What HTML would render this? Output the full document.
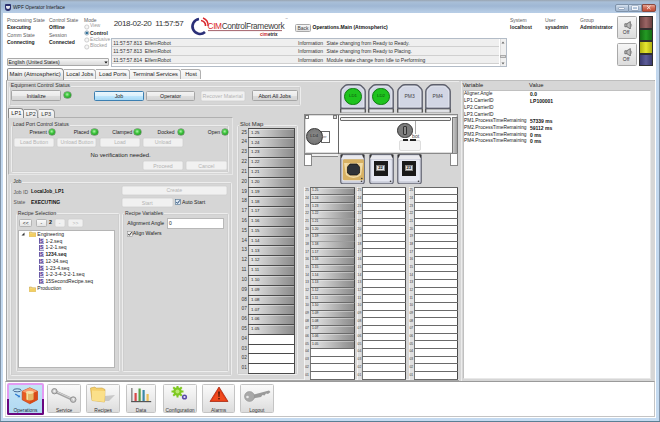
<!DOCTYPE html><html><head><meta charset="utf-8"><style>
*{box-sizing:border-box;margin:0;padding:0}
html,body{width:660px;height:422px;overflow:hidden;background:#fff;font-family:"Liberation Sans",sans-serif;color:#222}
.a{position:absolute}
.t{position:absolute;white-space:nowrap;line-height:1}
.b{font-weight:bold}
.btn{position:absolute;border:1px solid #a6a6a6;border-radius:1.5px;padding-top:0.7px;background:linear-gradient(#f3f3f3,#ebebeb 50%,#dddddd 51%,#d4d4d4);text-align:center;white-space:nowrap;color:#222}
.dis{border-color:#e4e4e4;background:#f1f1f1;color:#b4b4b4;box-shadow:0 0 0 0.5px #cfcfcf}
.grp{position:absolute;border:1px solid #bcbcbc;box-shadow:inset 1px 1px 0 #efefef, 1px 1px 0 #efefef}
.led{position:absolute;border-radius:50%;background:radial-gradient(circle at 45% 40%,#b0f4a8 0,#44c844 38%,#1f9a1f 75%,#2a6a2a 100%);box-shadow:0 0 0 0.5px #4a7a4a}
</style></head><body><div class="a" style="left:0px;top:0px;width:660px;height:422px;background:linear-gradient(#98a4b0,#a9bfd8 2px,#9fb7d4 6px,#b5cbe4 11.5px,#c2d7ee 20px,#c4daf0)"></div>
<div class="a" style="left:0px;top:0px;width:0.9px;height:422px;background:#8294a8"></div>
<div class="a" style="left:659.1px;top:0px;width:0.9px;height:422px;background:#8294a8"></div>
<div class="a" style="left:0px;top:421px;width:660px;height:1px;background:#5a7f94"></div>
<div class="a" style="left:3.2px;top:12.5px;width:653.3px;height:405.8px;background:#fff"></div>
<div class="a" style="left:4.5px;top:4px;width:6.5px;height:7px;background:#2a2f6e;border-radius:1px 1px 3px 3px"></div>
<div class="a" style="left:6px;top:5.5px;width:3.5px;height:3.5px;background:#e8e8f0;border-radius:0 0 2px 2px"></div>
<div class="t " style="left:13px;top:6.3px;font-size:4.9px;color:#1c1c24">WPF Operator Interface</div>
<div class="a" style="left:614.5px;top:4px;width:14px;height:7.5px;border:0.8px solid #7f93aa;border-radius:2px 0 0 2px;background:linear-gradient(#d4e0ee,#b2c4da 50%,#a6bad2)"></div>
<div class="a" style="left:618.5px;top:8.3px;width:5px;height:1.2px;background:#f4f6fa;box-shadow:0 0 0 0.4px #7a8aa0"></div>
<div class="a" style="left:628.5px;top:4px;width:13px;height:7.5px;border:0.8px solid #7f93aa;border-left:0;background:linear-gradient(#d4e0ee,#b2c4da 50%,#a6bad2)"></div>
<div class="a" style="left:632.3px;top:5.6px;width:5.4px;height:4.3px;border:0.8px solid #f2f5fa;box-shadow:0 0 0 0.4px #7a8aa0"></div>
<div class="a" style="left:641.5px;top:4px;width:14.5px;height:7.5px;border:0.8px solid #8a4a40;border-radius:0 2px 2px 0;background:linear-gradient(#e6a898,#d06a54 50%,#c04a34)"></div>
<svg class="a" style="left:646px;top:5.3px" width="5.5" height="5" viewBox="0 0 5.5 5"><path d="M1 0.8 L4.5 4.2 M4.5 0.8 L1 4.2" stroke="#f6e8e4" stroke-width="0.95"/></svg>
<div class="t " style="left:7px;top:18px;font-size:5px;color:#5c5c5c">Processing State</div>
<div class="t b" style="left:7px;top:24.5px;font-size:5px;">Executing</div>
<div class="t " style="left:7px;top:33px;font-size:5px;color:#5c5c5c">Comm State</div>
<div class="t b" style="left:7px;top:39.5px;font-size:5px;">Connecting</div>
<div class="t " style="left:49px;top:18px;font-size:5px;color:#5c5c5c">Control State</div>
<div class="t b" style="left:49px;top:24.5px;font-size:5px;">Offline</div>
<div class="t " style="left:49px;top:33px;font-size:5px;color:#5c5c5c">Session</div>
<div class="t b" style="left:49px;top:39.5px;font-size:5px;">Connected</div>
<div class="t " style="left:84px;top:18px;font-size:5px;color:#5c5c5c">Mode</div>
<svg class="a" style="left:83.5px;top:23.5px" width="6" height="6" viewBox="0 0 6 6"><circle cx="2.8" cy="3" r="2.1" fill="#f6f6f6" stroke="#b4b4b4" stroke-width="0.6"/></svg>
<div class="t " style="left:90px;top:23.900000000000002px;font-size:4.75px;color:#9a9a9a">View</div>
<svg class="a" style="left:83.5px;top:30.3px" width="6" height="6" viewBox="0 0 6 6"><circle cx="2.8" cy="3" r="2.1" fill="#eef2f5" stroke="#6f8799" stroke-width="0.6"/><circle cx="2.8" cy="3" r="1.3" fill="#2e6f98"/></svg>
<div class="t b" style="left:90px;top:30.6px;font-size:5px;">Control</div>
<svg class="a" style="left:83.5px;top:37.1px" width="6" height="6" viewBox="0 0 6 6"><circle cx="2.8" cy="3" r="2.1" fill="#f6f6f6" stroke="#b4b4b4" stroke-width="0.6"/></svg>
<div class="t " style="left:90px;top:37.5px;font-size:4.75px;color:#9a9a9a">Exclusive</div>
<svg class="a" style="left:83.5px;top:43.900000000000006px" width="6" height="6" viewBox="0 0 6 6"><circle cx="2.8" cy="3" r="2.1" fill="#f6f6f6" stroke="#b4b4b4" stroke-width="0.6"/></svg>
<div class="t " style="left:90px;top:44.300000000000004px;font-size:4.75px;color:#9a9a9a">Blocked</div>
<div class="t " style="left:113.7px;top:19.7px;font-size:8.1px;color:#333;letter-spacing:-0.36px">2018-02-20&nbsp; 11:57:57</div>
<svg class="a" style="left:190px;top:16px" width="100" height="24" viewBox="0 0 100 24">
<path d="M9 3 A7.5 7.5 0 1 0 15 16" fill="none" stroke="#2a2f78" stroke-width="2.6"/>
<path d="M11 4.5 A5 5 0 0 1 15.5 10" fill="none" stroke="#d9262c" stroke-width="1.6"/>
<path d="M13 2 A8 8 0 0 1 18 10" fill="none" stroke="#d9262c" stroke-width="1.4"/>
<line x1="18" y1="14.6" x2="92" y2="14.6" stroke="#7a1c2a" stroke-width="0.7"/>
</svg>
<div class="t " style="left:207.5px;top:21.5px;font-size:8.3px;color:#3b3b3b;letter-spacing:-0.35px"><span style="color:#d9262c">CIM</span>ControlFramework</div>
<div class="t " style="left:285px;top:18px;font-size:3px;color:#888">&trade;</div>
<div class="t " style="left:260px;top:32.5px;font-size:4.6px;color:#222;font-weight:bold"><span style="color:#c8262c">cim</span>etrix</div>
<div class="btn " style="left:295.3px;top:24.2px;width:15.5px;height:7.6px;line-height:5.6px;font-size:5px;background:linear-gradient(#f7f7f7,#e0e0e0);border-color:#a8a8a8;line-height:5.8px;color:#444">Back</div>
<div class="t b" style="left:312.5px;top:25px;font-size:5.05px;color:#111">Operations.Main (Atmospheric)</div>
<div class="t " style="left:510px;top:17.5px;font-size:5px;color:#5c5c5c">System</div>
<div class="t b" style="left:510px;top:24.5px;font-size:5px;">localhost</div>
<div class="t " style="left:545px;top:17.5px;font-size:5px;color:#5c5c5c">User</div>
<div class="t b" style="left:545px;top:24.5px;font-size:5px;">sysadmin</div>
<div class="t " style="left:580px;top:17.5px;font-size:5px;color:#5c5c5c">Group</div>
<div class="t b" style="left:580px;top:24.5px;font-size:5px;">Administrator</div>
<div class="a" style="left:617px;top:16px;width:20px;height:23px;border:1px solid #a9a9a9;border-radius:1.5px;background:linear-gradient(#f6f6f6,#dcdcdc)"></div>
<svg class="a" style="left:622.5px;top:20.6px" width="10" height="8.5" viewBox="0 0 12 10">
<path d="M2.2 3.2 L4.6 3.2 L8.8 0.6 L8.8 9.4 L4.6 6.8 L2.2 6.8 Z" fill="#bdbdbd" stroke="#4a4a4a" stroke-width="0.8" stroke-linejoin="round"/>
<path d="M4.6 3.2 L4.6 6.8" stroke="#4a4a4a" stroke-width="0.6"/>
<path d="M9.8 3.2 Q11 5 9.8 6.8" fill="none" stroke="#777" stroke-width="0.7"/>
</svg>
<div class="t " style="left:622.8px;top:30.3px;font-size:5px;color:#333">Off</div>
<div class="a" style="left:617px;top:43px;width:20px;height:23px;border:1px solid #a9a9a9;border-radius:1.5px;background:linear-gradient(#f6f6f6,#dcdcdc)"></div>
<svg class="a" style="left:622.5px;top:47.6px" width="10" height="8.5" viewBox="0 0 12 10">
<path d="M2.2 3.2 L4.6 3.2 L8.8 0.6 L8.8 9.4 L4.6 6.8 L2.2 6.8 Z" fill="#bdbdbd" stroke="#4a4a4a" stroke-width="0.8" stroke-linejoin="round"/>
<path d="M4.6 3.2 L4.6 6.8" stroke="#4a4a4a" stroke-width="0.6"/>
<path d="M9.8 3.2 Q11 5 9.8 6.8" fill="none" stroke="#777" stroke-width="0.7"/>
</svg>
<div class="t " style="left:622.8px;top:57.3px;font-size:5px;color:#333">Off</div>
<div class="a" style="left:639px;top:16.0px;width:14px;height:12.5px;border:0.6px solid #303030;background:linear-gradient(90deg,#6a4040,#9a6464 50%,#6a4040)"></div>
<div class="a" style="left:639px;top:28.5px;width:14px;height:12.5px;border:0.6px solid #303030;background:linear-gradient(90deg,#146e14,#249a24 50%,#146e14)"></div>
<div class="a" style="left:639px;top:41.0px;width:14px;height:12.5px;border:0.6px solid #303030;background:linear-gradient(90deg,#b0b010,#e6e630 50%,#b0b010)"></div>
<div class="a" style="left:639px;top:53.5px;width:14px;height:12.5px;border:0.6px solid #303030;background:linear-gradient(90deg,#3a3a70,#5c5c98 50%,#3a3a70)"></div>
<div class="a" style="left:111.4px;top:38.2px;width:395.5px;height:28.6px;border:1px solid #b3bcc7;background:#fff"></div>
<div class="a" style="left:112.4px;top:39.0px;width:387px;height:8.2px;background:#efefef;border-bottom:0.6px solid #d0d0d0"></div>
<div class="t " style="left:113.3px;top:41.0px;font-size:5px;color:#333">11:57:57.813</div>
<div class="t " style="left:144.7px;top:41.0px;font-size:5px;color:#333">ElfemRobot</div>
<div class="t " style="left:298px;top:41.0px;font-size:5px;color:#333">Information</div>
<div class="t " style="left:326.6px;top:41.0px;font-size:5px;color:#333">State changing from Ready to Ready.</div>
<div class="a" style="left:112.4px;top:47.4px;width:387px;height:8.2px;background:#efefef;border-bottom:0.6px solid #d0d0d0"></div>
<div class="t " style="left:113.3px;top:49.4px;font-size:5px;color:#333">11:57:57.813</div>
<div class="t " style="left:144.7px;top:49.4px;font-size:5px;color:#333">ElfemRobot</div>
<div class="t " style="left:298px;top:49.4px;font-size:5px;color:#333">Information</div>
<div class="t " style="left:326.6px;top:49.4px;font-size:5px;color:#333">State changing from Ready to Placing.</div>
<div class="a" style="left:112.4px;top:55.8px;width:387px;height:8.2px;background:#efefef;border-bottom:0.6px solid #d0d0d0"></div>
<div class="t " style="left:113.3px;top:57.8px;font-size:5px;color:#333">11:57:57.814</div>
<div class="t " style="left:144.7px;top:57.8px;font-size:5px;color:#333">ElfemRobot</div>
<div class="t " style="left:298px;top:57.8px;font-size:5px;color:#333">Information</div>
<div class="t " style="left:326.6px;top:57.8px;font-size:5px;color:#333">Module state change from Idle to Performing</div>
<div class="a" style="left:499.5px;top:39.2px;width:6.5px;height:26.6px;background:#f0f0f0;border-left:0.5px solid #ddd"></div>
<svg class="a" style="left:501px;top:41px" width="4" height="3" viewBox="0 0 4 3"><path d="M0.5 2.5 L2 0.6 L3.5 2.5Z" fill="#666"/></svg>
<svg class="a" style="left:501px;top:61.8px" width="4" height="3" viewBox="0 0 4 3"><path d="M0.5 0.5 L2 2.4 L3.5 0.5Z" fill="#666"/></svg>
<div class="a" style="left:500px;top:55px;width:6px;height:3px;background:#dcdcdc;border:0.5px solid #aaa"></div>
<div class="a" style="left:7px;top:57.5px;width:102px;height:8.5px;border:1px solid #a9a9a9;border-radius:1px;background:linear-gradient(#f7f7f7,#e6e6e6 50%,#dadada)"></div>
<div class="t " style="left:8.5px;top:59.5px;font-size:5px;color:#222">English (United States)</div>
<svg class="a" style="left:103.5px;top:60.6px" width="4" height="3" viewBox="0 0 4 3"><path d="M0.3 0.4 L2 2.6 L3.7 0.4Z" fill="#111"/></svg>
<div class="a" style="left:6.5px;top:68.3px;width:57.3px;height:12px;border:1px solid #8c8c8c;border-bottom:0;border-radius:2px 4px 0 0;background:linear-gradient(#fdfdfd,#e6e6e6 70%,#dcdcdc)"></div>
<div class="t " style="left:6.5px;top:72.2px;width:57.3px;text-align:center;font-size:5.9px;color:#222">Main (Atmospheric)</div>
<div class="a" style="left:63.8px;top:69.3px;width:32.0px;height:10.2px;border:1px solid #b0b0b0;border-left:0;border-bottom:0;border-radius:0 3px 0 0;background:linear-gradient(#fafafa,#ececec)"></div>
<div class="t " style="left:63.8px;top:72.3px;width:32.0px;text-align:center;font-size:5.7px;color:#222">Local Jobs</div>
<div class="a" style="left:95.7px;top:69.3px;width:34.3px;height:10.2px;border:1px solid #b0b0b0;border-left:0;border-bottom:0;border-radius:0 3px 0 0;background:linear-gradient(#fafafa,#ececec)"></div>
<div class="t " style="left:95.7px;top:72.3px;width:34.3px;text-align:center;font-size:5.7px;color:#222">Load Ports</div>
<div class="a" style="left:130px;top:69.3px;width:51px;height:10.2px;border:1px solid #b0b0b0;border-left:0;border-bottom:0;border-radius:0 3px 0 0;background:linear-gradient(#fafafa,#ececec)"></div>
<div class="t " style="left:130px;top:72.3px;width:51px;text-align:center;font-size:5.7px;color:#222">Terminal Services</div>
<div class="a" style="left:181px;top:69.3px;width:20px;height:10.2px;border:1px solid #b0b0b0;border-left:0;border-bottom:0;border-radius:0 3px 0 0;background:linear-gradient(#fafafa,#ececec)"></div>
<div class="t " style="left:181px;top:72.3px;width:20px;text-align:center;font-size:5.7px;color:#222">Host</div>
<div class="a" style="left:6px;top:79.5px;width:649px;height:301px;background:#d6d6d6;border:1px solid #a6a6a6;border-top-color:#bdbdbd"></div>
<div class="a" style="left:7px;top:80.5px;width:647px;height:299px;border:1px solid #ececec"></div>
<div class="a" style="left:8.5px;top:85.5px;width:292.5px;height:20.5px;border:1px solid #ededed;border-radius:1.5px;box-shadow:inset 0 0 0 0.6px #c9c9c9"></div>
<div class="t" style="left:9.8px;top:82.7px;font-size:5.2px;color:#333;background:#d6d6d6;padding:0 1px">Equipment Control Status</div>
<div class="btn " style="left:11px;top:90.3px;width:50.4px;height:10.3px;line-height:8.3px;font-size:5.3px;">Initialize</div>
<div class="led" style="left:64.3px;top:91.7px;width:6.6px;height:6.6px"></div>
<div class="btn " style="left:94px;top:90.7px;width:50px;height:10px;line-height:8px;font-size:5.3px;border-color:#3c7fb1;background:linear-gradient(#eaf6fd,#d9f0fc 50%,#bee6fd 51%,#a7d9f5)">Job</div>
<div class="btn " style="left:146px;top:90.7px;width:49px;height:10px;line-height:8px;font-size:5.3px;">Operator</div>
<div class="btn dis" style="left:200.6px;top:90.7px;width:44px;height:10px;line-height:8px;font-size:5.3px;">Recover Material</div>
<div class="btn " style="left:251.6px;top:90.4px;width:46px;height:10.2px;line-height:8.2px;font-size:5.3px;">Abort All Jobs</div>
<div class="a" style="left:8px;top:117.3px;width:224.5px;height:57.7px;border:1px solid #b0b0b0;border-right-color:#e6e6e6;border-bottom-color:#e6e6e6;background:#d6d6d6"></div>
<div class="a" style="left:8.3px;top:107.6px;width:16.099999999999998px;height:10.7px;border:1px solid #888;border-bottom:0;border-radius:1px 4px 0 0;background:linear-gradient(#fdfdfd,#e9e9e9)"></div>
<div class="t " style="left:8.3px;top:111.2px;width:16.099999999999998px;text-align:center;font-size:5.7px;color:#222">LP1</div>
<div class="a" style="left:24.4px;top:109.3px;width:14.100000000000001px;height:8.3px;border:1px solid #999;border-left:0;border-bottom:0;border-radius:0 4px 0 0;background:linear-gradient(#f8f8f8,#e6e6e6)"></div>
<div class="t " style="left:23.9px;top:111.6px;width:14.100000000000001px;text-align:center;font-size:5.5px;color:#333">LP2</div>
<div class="a" style="left:38.5px;top:109.3px;width:16.5px;height:8.3px;border:1px solid #999;border-left:0;border-bottom:0;border-radius:0 4px 0 0;background:linear-gradient(#f8f8f8,#e6e6e6)"></div>
<div class="t " style="left:38.0px;top:111.6px;width:16.5px;text-align:center;font-size:5.5px;color:#333">LP3</div>
<div class="a" style="left:11.3px;top:124.5px;width:217.5px;height:48.5px;border:1px solid #ededed;border-radius:1.5px;box-shadow:inset 0 0 0 0.6px #c9c9c9"></div>
<div class="t" style="left:12px;top:121.7px;font-size:5.1px;color:#333;background:#d6d6d6;padding:0 1px">Load Port Control Status</div>
<div class="t" style="left:6.799999999999997px;top:129.8px;width:40px;text-align:right;font-size:5px;color:#222">Present</div>
<div class="led" style="left:48.599999999999994px;top:129.10000000000002px;width:6.4px;height:6.4px"></div>
<div class="t" style="left:49.0px;top:129.8px;width:40px;text-align:right;font-size:5px;color:#222">Placed</div>
<div class="led" style="left:91.3px;top:129.10000000000002px;width:6.4px;height:6.4px"></div>
<div class="t" style="left:92.30000000000001px;top:129.8px;width:40px;text-align:right;font-size:5px;color:#222">Clamped</div>
<div class="led" style="left:134.3px;top:129.10000000000002px;width:6.4px;height:6.4px"></div>
<div class="t" style="left:134.5px;top:129.8px;width:40px;text-align:right;font-size:5px;color:#222">Docked</div>
<div class="led" style="left:177.5px;top:129.10000000000002px;width:6.4px;height:6.4px"></div>
<div class="t" style="left:180.0px;top:129.8px;width:40px;text-align:right;font-size:5px;color:#222">Open</div>
<div class="led" style="left:221.8px;top:129.10000000000002px;width:6.4px;height:6.4px"></div>
<div class="btn dis" style="left:14.2px;top:137.7px;width:39.8px;height:9.2px;line-height:7.199999999999999px;font-size:5.2px;">Load Button</div>
<div class="btn dis" style="left:57.3px;top:137.7px;width:39.10000000000001px;height:9.2px;line-height:7.199999999999999px;font-size:5.2px;">Unload Button</div>
<div class="btn dis" style="left:100px;top:137.7px;width:40px;height:9.2px;line-height:7.199999999999999px;font-size:5.2px;">Load</div>
<div class="btn dis" style="left:143px;top:137.7px;width:40px;height:9.2px;line-height:7.199999999999999px;font-size:5.2px;">Unload</div>
<div class="t " style="left:90.5px;top:152.5px;font-size:5.9px;color:#222">No verification needed.</div>
<div class="btn dis" style="left:143px;top:161px;width:40px;height:9px;line-height:7px;font-size:5.2px;">Proceed</div>
<div class="btn dis" style="left:185.5px;top:161px;width:41.5px;height:9px;line-height:7px;font-size:5.2px;">Cancel</div>
<div class="a" style="left:10px;top:181.8px;width:222px;height:193.8px;border:1px solid #ededed;border-radius:1.5px;box-shadow:inset 0 0 0 0.6px #c9c9c9"></div>
<div class="t" style="left:12.2px;top:179.0px;font-size:5.1px;color:#333;background:#d6d6d6;padding:0 1px">Job</div>
<div class="t " style="left:13.6px;top:189.6px;font-size:5px;color:#555">Job ID</div>
<div class="t b" style="left:31px;top:189.6px;font-size:4.85px;color:#111">LocalJob_LP1</div>
<div class="t " style="left:13.6px;top:200px;font-size:5px;color:#555">State</div>
<div class="t b" style="left:31px;top:200px;font-size:5px;color:#111">EXECUTING</div>
<div class="btn dis" style="left:121.8px;top:185.7px;width:105.2px;height:9.5px;line-height:7.5px;font-size:5.2px;">Create</div>
<div class="btn dis" style="left:121.8px;top:198px;width:50.8px;height:8.8px;line-height:6.800000000000001px;font-size:5.2px;">Start</div>
<svg class="a" style="left:175px;top:199.3px" width="6" height="6" viewBox="0 0 6 6"><rect x="0.4" y="0.4" width="5.2" height="5.2" fill="#dde8f2" stroke="#4f6f8c" stroke-width="0.6"/><path d="M1.3 3 L2.5 4.4 L4.8 1.3" fill="none" stroke="#1a3f6e" stroke-width="0.9"/></svg>
<div class="t " style="left:182px;top:199.8px;font-size:5.2px;color:#222">Auto Start</div>
<div class="a" style="left:15.5px;top:213.3px;width:104px;height:158.5px;border:1px solid #ededed;border-radius:1.5px;box-shadow:inset 0 0 0 0.6px #c9c9c9"></div>
<div class="t" style="left:16.8px;top:210.5px;font-size:5.1px;color:#333;background:#d6d6d6;padding:0 1px">Recipe Selection</div>
<div class="btn " style="left:19px;top:218.7px;width:13.4px;height:8px;line-height:6px;font-size:5px;border-color:#b4b4b4;background:linear-gradient(#fafafa,#e4e4e4)">&lt;&lt;</div>
<div class="btn " style="left:35.5px;top:218.7px;width:11.5px;height:8px;line-height:6px;font-size:5px;border-color:#b4b4b4;background:linear-gradient(#fafafa,#e4e4e4)">-</div>
<div class="t b" style="left:49px;top:220.4px;font-size:5.4px;color:#111">2</div>
<div class="btn dis" style="left:54.5px;top:218.7px;width:10px;height:8px;line-height:6px;font-size:5px;">-</div>
<div class="btn dis" style="left:67.6px;top:218.7px;width:15.7px;height:8px;line-height:6px;font-size:5px;">&gt;&gt;</div>
<div class="a" style="left:18.2px;top:230px;width:96.8px;height:138px;background:#fff;border:1px solid #b5b5b5"></div>
<svg class="a" style="left:21px;top:232px" width="4" height="4" viewBox="0 0 4 4"><path d="M3.5 0.5 L3.5 3.5 L0.5 3.5 Z" fill="#333"/></svg>
<svg class="a" style="left:29px;top:231px" width="7" height="6" viewBox="0 0 7 6"><path d="M0.4 1 L2.6 1 L3.2 1.8 L6.6 1.8 L6.6 5.6 L0.4 5.6 Z" fill="#f7dc8a" stroke="#b8922e" stroke-width="0.5"/><path d="M0.4 2.6 L6.6 2.6 L6.6 5.6 L0.4 5.6Z" fill="#f3cf62"/></svg>
<div class="t " style="left:37.3px;top:231.6px;font-size:5px;color:#222">Engineering</div>
<div class="a" style="left:39.3px;top:238.39999999999998px;width:4.4px;height:5.6px;background:#dcdcf0;border-left:0.6px solid #6a5aa8;border-bottom:0.5px solid #9a9ac0"></div>
<div class="t " style="left:39.9px;top:238.7px;font-size:5px;color:#4a2a8a;font-weight:bold">S</div>
<div class="t " style="left:45.5px;top:238.6px;font-size:5px;color:#222">1-2.seq</div>
<div class="a" style="left:39.3px;top:245.14999999999998px;width:4.4px;height:5.6px;background:#dcdcf0;border-left:0.6px solid #6a5aa8;border-bottom:0.5px solid #9a9ac0"></div>
<div class="t " style="left:39.9px;top:245.45px;font-size:5px;color:#4a2a8a;font-weight:bold">S</div>
<div class="t " style="left:45.5px;top:245.35px;font-size:5px;color:#222">1-2-1.seq</div>
<div class="a" style="left:39.3px;top:251.89999999999998px;width:4.4px;height:5.6px;background:#dcdcf0;border-left:0.6px solid #6a5aa8;border-bottom:0.5px solid #9a9ac0"></div>
<div class="t " style="left:39.9px;top:252.2px;font-size:5px;color:#4a2a8a;font-weight:bold">S</div>
<div class="t b" style="left:45.5px;top:252.1px;font-size:5px;color:#222">1234.seq</div>
<div class="a" style="left:39.3px;top:258.65px;width:4.4px;height:5.6px;background:#dcdcf0;border-left:0.6px solid #6a5aa8;border-bottom:0.5px solid #9a9ac0"></div>
<div class="t " style="left:39.9px;top:258.95px;font-size:5px;color:#4a2a8a;font-weight:bold">S</div>
<div class="t " style="left:45.5px;top:258.84999999999997px;font-size:5px;color:#222">12-34.seq</div>
<div class="a" style="left:39.3px;top:265.4px;width:4.4px;height:5.6px;background:#dcdcf0;border-left:0.6px solid #6a5aa8;border-bottom:0.5px solid #9a9ac0"></div>
<div class="t " style="left:39.9px;top:265.7px;font-size:5px;color:#4a2a8a;font-weight:bold">S</div>
<div class="t " style="left:45.5px;top:265.59999999999997px;font-size:5px;color:#222">1-23-4.seq</div>
<div class="a" style="left:39.3px;top:272.15px;width:4.4px;height:5.6px;background:#dcdcf0;border-left:0.6px solid #6a5aa8;border-bottom:0.5px solid #9a9ac0"></div>
<div class="t " style="left:39.9px;top:272.45px;font-size:5px;color:#4a2a8a;font-weight:bold">S</div>
<div class="t " style="left:45.5px;top:272.34999999999997px;font-size:5px;color:#222">1-2-3-4-3-2-1.seq</div>
<div class="a" style="left:39.3px;top:278.9px;width:4.4px;height:5.6px;background:#dcdcf0;border-left:0.6px solid #6a5aa8;border-bottom:0.5px solid #9a9ac0"></div>
<div class="t " style="left:39.9px;top:279.2px;font-size:5px;color:#4a2a8a;font-weight:bold">S</div>
<div class="t " style="left:45.5px;top:279.09999999999997px;font-size:5px;color:#222">15SecondRecipe.seq</div>
<svg class="a" style="left:29px;top:285.6px" width="7" height="6" viewBox="0 0 7 6"><path d="M0.4 1 L2.6 1 L3.2 1.8 L6.6 1.8 L6.6 5.6 L0.4 5.6 Z" fill="#f7dc8a" stroke="#b8922e" stroke-width="0.5"/><path d="M0.4 2.6 L6.6 2.6 L6.6 5.6 L0.4 5.6Z" fill="#f3cf62"/></svg>
<div class="t " style="left:37.3px;top:286.2px;font-size:5px;color:#222">Production</div>
<div class="a" style="left:121.5px;top:213.3px;width:107.5px;height:158.5px;border:1px solid #ededed;border-radius:1.5px;box-shadow:inset 0 0 0 0.6px #c9c9c9"></div>
<div class="t" style="left:124px;top:210.5px;font-size:5.1px;color:#333;background:#d6d6d6;padding:0 1px">Recipe Variables</div>
<div class="t " style="left:127.3px;top:221px;font-size:5.1px;color:#222">Alignment Angle</div>
<div class="a" style="left:167px;top:218px;width:57px;height:10.7px;background:#fff;border:1px solid #b8b8b8"></div>
<div class="t " style="left:169px;top:220.5px;font-size:5px;color:#222">0</div>
<svg class="a" style="left:126.5px;top:230.8px" width="6" height="6" viewBox="0 0 6 6"><rect x="0.4" y="0.4" width="5" height="5" fill="#ececec" stroke="#8a8a8a" stroke-width="0.5"/><path d="M1.2 2.9 L2.4 4.3 L4.7 1.2" fill="none" stroke="#222" stroke-width="0.9"/></svg>
<div class="t " style="left:132.8px;top:231.1px;font-size:5.1px;color:#222">Align Wafers</div>
<div class="a" style="left:236.5px;top:124.8px;width:61.5px;height:249.9px;border:1px solid #ededed;border-radius:1.5px;box-shadow:inset 0 0 0 0.6px #c9c9c9"></div>
<div class="t" style="left:239px;top:122.0px;font-size:5.9px;color:#333;background:#d6d6d6;padding:0 1px">Slot Map</div>
<div class="a" style="left:248px;top:128.1px;width:47.3px;height:206.22px;background:linear-gradient(90deg,#d8d8d8,#e2e2e2 8%,#c4c4c4 40%,#a0a0a0 75%,#8a8a8a)"></div>
<div class="a" style="left:248px;top:334.32px;width:47.3px;height:39.28px;background:#fff"></div>
<div class="a" style="left:248px;top:128.1px;width:0.9px;height:245.5px;background:#7a7a7a"></div>
<div class="a" style="left:294.3px;top:128.1px;width:1px;height:245.5px;background:#4a4a4a"></div>
<div class="a" style="left:248px;top:127.6px;width:47.3px;height:1px;background:#4a4a4a"></div>
<div class="a" style="left:248px;top:137.42px;width:47.3px;height:1px;background:#4a4a4a"></div>
<div class="a" style="left:248px;top:147.24px;width:47.3px;height:1px;background:#4a4a4a"></div>
<div class="a" style="left:248px;top:157.06px;width:47.3px;height:1px;background:#4a4a4a"></div>
<div class="a" style="left:248px;top:166.88px;width:47.3px;height:1px;background:#4a4a4a"></div>
<div class="a" style="left:248px;top:176.7px;width:47.3px;height:1px;background:#4a4a4a"></div>
<div class="a" style="left:248px;top:186.51999999999998px;width:47.3px;height:1px;background:#4a4a4a"></div>
<div class="a" style="left:248px;top:196.34px;width:47.3px;height:1px;background:#4a4a4a"></div>
<div class="a" style="left:248px;top:206.16px;width:47.3px;height:1px;background:#4a4a4a"></div>
<div class="a" style="left:248px;top:215.98px;width:47.3px;height:1px;background:#4a4a4a"></div>
<div class="a" style="left:248px;top:225.8px;width:47.3px;height:1px;background:#4a4a4a"></div>
<div class="a" style="left:248px;top:235.62px;width:47.3px;height:1px;background:#4a4a4a"></div>
<div class="a" style="left:248px;top:245.44px;width:47.3px;height:1px;background:#4a4a4a"></div>
<div class="a" style="left:248px;top:255.26px;width:47.3px;height:1px;background:#4a4a4a"></div>
<div class="a" style="left:248px;top:265.08000000000004px;width:47.3px;height:1px;background:#4a4a4a"></div>
<div class="a" style="left:248px;top:274.9px;width:47.3px;height:1px;background:#4a4a4a"></div>
<div class="a" style="left:248px;top:284.72px;width:47.3px;height:1px;background:#4a4a4a"></div>
<div class="a" style="left:248px;top:294.53999999999996px;width:47.3px;height:1px;background:#4a4a4a"></div>
<div class="a" style="left:248px;top:304.36px;width:47.3px;height:1px;background:#4a4a4a"></div>
<div class="a" style="left:248px;top:314.18px;width:47.3px;height:1px;background:#4a4a4a"></div>
<div class="a" style="left:248px;top:324.0px;width:47.3px;height:1px;background:#4a4a4a"></div>
<div class="a" style="left:248px;top:333.82px;width:47.3px;height:1px;background:#4a4a4a"></div>
<div class="a" style="left:248px;top:343.64px;width:47.3px;height:1px;background:#4a4a4a"></div>
<div class="a" style="left:248px;top:353.46000000000004px;width:47.3px;height:1px;background:#4a4a4a"></div>
<div class="a" style="left:248px;top:363.28px;width:47.3px;height:1px;background:#4a4a4a"></div>
<div class="a" style="left:248px;top:373.1px;width:47.3px;height:1px;background:#4a4a4a"></div>
<div class="t " style="left:241.5px;top:130.61px;font-size:4.8px;color:#333">25</div>
<div class="a" style="left:249px;top:128.6px;width:45.3px;height:1px;background:rgba(255,255,255,0.35)"></div>
<div class="t " style="left:251px;top:130.76px;font-size:4.4px;color:#222">1.25</div>
<div class="t " style="left:241.5px;top:140.43px;font-size:4.8px;color:#333">24</div>
<div class="a" style="left:249px;top:138.42px;width:45.3px;height:1px;background:rgba(255,255,255,0.35)"></div>
<div class="t " style="left:251px;top:140.57999999999998px;font-size:4.4px;color:#222">1.24</div>
<div class="t " style="left:241.5px;top:150.25000000000003px;font-size:4.8px;color:#333">23</div>
<div class="a" style="left:249px;top:148.24px;width:45.3px;height:1px;background:rgba(255,255,255,0.35)"></div>
<div class="t " style="left:251px;top:150.4px;font-size:4.4px;color:#222">1.23</div>
<div class="t " style="left:241.5px;top:160.07000000000002px;font-size:4.8px;color:#333">22</div>
<div class="a" style="left:249px;top:158.06px;width:45.3px;height:1px;background:rgba(255,255,255,0.35)"></div>
<div class="t " style="left:251px;top:160.22px;font-size:4.4px;color:#222">1.22</div>
<div class="t " style="left:241.5px;top:169.89000000000001px;font-size:4.8px;color:#333">21</div>
<div class="a" style="left:249px;top:167.88px;width:45.3px;height:1px;background:rgba(255,255,255,0.35)"></div>
<div class="t " style="left:251px;top:170.04px;font-size:4.4px;color:#222">1.21</div>
<div class="t " style="left:241.5px;top:179.71px;font-size:4.8px;color:#333">20</div>
<div class="a" style="left:249px;top:177.7px;width:45.3px;height:1px;background:rgba(255,255,255,0.35)"></div>
<div class="t " style="left:251px;top:179.85999999999999px;font-size:4.4px;color:#222">1.20</div>
<div class="t " style="left:241.5px;top:189.53px;font-size:4.8px;color:#333">19</div>
<div class="a" style="left:249px;top:187.51999999999998px;width:45.3px;height:1px;background:rgba(255,255,255,0.35)"></div>
<div class="t " style="left:251px;top:189.67999999999998px;font-size:4.4px;color:#222">1.19</div>
<div class="t " style="left:241.5px;top:199.35000000000002px;font-size:4.8px;color:#333">18</div>
<div class="a" style="left:249px;top:197.34px;width:45.3px;height:1px;background:rgba(255,255,255,0.35)"></div>
<div class="t " style="left:251px;top:199.5px;font-size:4.4px;color:#222">1.18</div>
<div class="t " style="left:241.5px;top:209.17000000000002px;font-size:4.8px;color:#333">17</div>
<div class="a" style="left:249px;top:207.16px;width:45.3px;height:1px;background:rgba(255,255,255,0.35)"></div>
<div class="t " style="left:251px;top:209.32px;font-size:4.4px;color:#222">1.17</div>
<div class="t " style="left:241.5px;top:218.99px;font-size:4.8px;color:#333">16</div>
<div class="a" style="left:249px;top:216.98px;width:45.3px;height:1px;background:rgba(255,255,255,0.35)"></div>
<div class="t " style="left:251px;top:219.14px;font-size:4.4px;color:#222">1.16</div>
<div class="t " style="left:241.5px;top:228.81000000000003px;font-size:4.8px;color:#333">15</div>
<div class="a" style="left:249px;top:226.8px;width:45.3px;height:1px;background:rgba(255,255,255,0.35)"></div>
<div class="t " style="left:251px;top:228.96px;font-size:4.4px;color:#222">1.15</div>
<div class="t " style="left:241.5px;top:238.63000000000002px;font-size:4.8px;color:#333">14</div>
<div class="a" style="left:249px;top:236.62px;width:45.3px;height:1px;background:rgba(255,255,255,0.35)"></div>
<div class="t " style="left:251px;top:238.78px;font-size:4.4px;color:#222">1.14</div>
<div class="t " style="left:241.5px;top:248.45000000000002px;font-size:4.8px;color:#333">13</div>
<div class="a" style="left:249px;top:246.44px;width:45.3px;height:1px;background:rgba(255,255,255,0.35)"></div>
<div class="t " style="left:251px;top:248.6px;font-size:4.4px;color:#222">1.13</div>
<div class="t " style="left:241.5px;top:258.27px;font-size:4.8px;color:#333">12</div>
<div class="a" style="left:249px;top:256.26px;width:45.3px;height:1px;background:rgba(255,255,255,0.35)"></div>
<div class="t " style="left:251px;top:258.41999999999996px;font-size:4.4px;color:#222">1.12</div>
<div class="t " style="left:241.5px;top:268.09000000000003px;font-size:4.8px;color:#333">11</div>
<div class="a" style="left:249px;top:266.08000000000004px;width:45.3px;height:1px;background:rgba(255,255,255,0.35)"></div>
<div class="t " style="left:251px;top:268.24px;font-size:4.4px;color:#222">1.11</div>
<div class="t " style="left:241.5px;top:277.90999999999997px;font-size:4.8px;color:#333">10</div>
<div class="a" style="left:249px;top:275.9px;width:45.3px;height:1px;background:rgba(255,255,255,0.35)"></div>
<div class="t " style="left:251px;top:278.05999999999995px;font-size:4.4px;color:#222">1.10</div>
<div class="t " style="left:241.5px;top:287.73px;font-size:4.8px;color:#333">09</div>
<div class="a" style="left:249px;top:285.72px;width:45.3px;height:1px;background:rgba(255,255,255,0.35)"></div>
<div class="t " style="left:251px;top:287.88px;font-size:4.4px;color:#222">1.09</div>
<div class="t " style="left:241.5px;top:297.54999999999995px;font-size:4.8px;color:#333">08</div>
<div class="a" style="left:249px;top:295.53999999999996px;width:45.3px;height:1px;background:rgba(255,255,255,0.35)"></div>
<div class="t " style="left:251px;top:297.69999999999993px;font-size:4.4px;color:#222">1.08</div>
<div class="t " style="left:241.5px;top:307.37px;font-size:4.8px;color:#333">07</div>
<div class="a" style="left:249px;top:305.36px;width:45.3px;height:1px;background:rgba(255,255,255,0.35)"></div>
<div class="t " style="left:251px;top:307.52px;font-size:4.4px;color:#222">1.07</div>
<div class="t " style="left:241.5px;top:317.19px;font-size:4.8px;color:#333">06</div>
<div class="a" style="left:249px;top:315.18px;width:45.3px;height:1px;background:rgba(255,255,255,0.35)"></div>
<div class="t " style="left:251px;top:317.34px;font-size:4.4px;color:#222">1.06</div>
<div class="t " style="left:241.5px;top:327.01px;font-size:4.8px;color:#333">05</div>
<div class="a" style="left:249px;top:325.0px;width:45.3px;height:1px;background:rgba(255,255,255,0.35)"></div>
<div class="t " style="left:251px;top:327.15999999999997px;font-size:4.4px;color:#222">1.05</div>
<div class="t " style="left:241.5px;top:336.83px;font-size:4.8px;color:#333">04</div>
<div class="t " style="left:241.5px;top:346.65px;font-size:4.8px;color:#333">03</div>
<div class="t " style="left:241.5px;top:356.47px;font-size:4.8px;color:#333">02</div>
<div class="t " style="left:241.5px;top:366.28999999999996px;font-size:4.8px;color:#333">01</div>
<svg class="a" style="left:340px;top:83.5px" width="26" height="29" viewBox="0 0 26 29">
<path d="M0.8 24.3 L0.8 7.5 Q0.8 5.5 2.2 4.2 L4.8 1.8 Q6 0.8 8 0.8 L18 0.8 Q20 0.8 21.2 1.8 L23.8 4.2 Q25.2 5.5 25.2 7.5 L25.2 24.3 Z" fill="#d2d6e4" stroke="#5e606c" stroke-width="1.4"/>
<path d="M2.4 23 L2.4 8 Q2.4 6.3 3.6 5.2 L5.8 3.2 Q6.8 2.4 8.5 2.4 L17.5 2.4 Q19.2 2.4 20.2 3.2 L22.4 5.2 Q23.6 6.3 23.6 8 L23.6 23 Z" fill="none" stroke="#e6e8f0" stroke-width="0.6"/>
<rect x="0.5" y="25.4" width="25" height="2.8" fill="#e2e3e8" stroke="#8a8a8a" stroke-width="0.5"/>
<rect x="0.3" y="25" width="1" height="3.6" fill="#333"/><rect x="24.7" y="25" width="1" height="3.6" fill="#333"/>
</svg>
<div class="a" style="left:344.2px;top:87.6px;width:17.6px;height:17.6px;border-radius:50%;background:#1ec31e;border:0.7px solid #0f7a0f"></div>
<div class="t " style="left:340px;top:94.4px;width:26px;text-align:center;font-size:4.4px;color:#0d4a0d">LD1</div>
<svg class="a" style="left:368px;top:83.5px" width="26" height="29" viewBox="0 0 26 29">
<path d="M0.8 24.3 L0.8 7.5 Q0.8 5.5 2.2 4.2 L4.8 1.8 Q6 0.8 8 0.8 L18 0.8 Q20 0.8 21.2 1.8 L23.8 4.2 Q25.2 5.5 25.2 7.5 L25.2 24.3 Z" fill="#d2d6e4" stroke="#5e606c" stroke-width="1.4"/>
<path d="M2.4 23 L2.4 8 Q2.4 6.3 3.6 5.2 L5.8 3.2 Q6.8 2.4 8.5 2.4 L17.5 2.4 Q19.2 2.4 20.2 3.2 L22.4 5.2 Q23.6 6.3 23.6 8 L23.6 23 Z" fill="none" stroke="#e6e8f0" stroke-width="0.6"/>
<rect x="0.5" y="25.4" width="25" height="2.8" fill="#e2e3e8" stroke="#8a8a8a" stroke-width="0.5"/>
<rect x="0.3" y="25" width="1" height="3.6" fill="#333"/><rect x="24.7" y="25" width="1" height="3.6" fill="#333"/>
</svg>
<div class="a" style="left:372.2px;top:87.6px;width:17.6px;height:17.6px;border-radius:50%;background:#1ec31e;border:0.7px solid #0f7a0f"></div>
<div class="t " style="left:368px;top:94.4px;width:26px;text-align:center;font-size:4.4px;color:#0d4a0d">LD2</div>
<svg class="a" style="left:396.6px;top:83.5px" width="26" height="29" viewBox="0 0 26 29">
<path d="M0.8 24.3 L0.8 7.5 Q0.8 5.5 2.2 4.2 L4.8 1.8 Q6 0.8 8 0.8 L18 0.8 Q20 0.8 21.2 1.8 L23.8 4.2 Q25.2 5.5 25.2 7.5 L25.2 24.3 Z" fill="#d2d6e4" stroke="#5e606c" stroke-width="1.4"/>
<path d="M2.4 23 L2.4 8 Q2.4 6.3 3.6 5.2 L5.8 3.2 Q6.8 2.4 8.5 2.4 L17.5 2.4 Q19.2 2.4 20.2 3.2 L22.4 5.2 Q23.6 6.3 23.6 8 L23.6 23 Z" fill="none" stroke="#e6e8f0" stroke-width="0.6"/>
<rect x="0.5" y="25.4" width="25" height="2.8" fill="#e2e3e8" stroke="#8a8a8a" stroke-width="0.5"/>
<rect x="0.3" y="25" width="1" height="3.6" fill="#333"/><rect x="24.7" y="25" width="1" height="3.6" fill="#333"/>
</svg>
<div class="t " style="left:396.6px;top:94.4px;width:26px;text-align:center;font-size:5px;color:#444">PM3</div>
<svg class="a" style="left:424.7px;top:83.5px" width="26" height="29" viewBox="0 0 26 29">
<path d="M0.8 24.3 L0.8 7.5 Q0.8 5.5 2.2 4.2 L4.8 1.8 Q6 0.8 8 0.8 L18 0.8 Q20 0.8 21.2 1.8 L23.8 4.2 Q25.2 5.5 25.2 7.5 L25.2 24.3 Z" fill="#d2d6e4" stroke="#5e606c" stroke-width="1.4"/>
<path d="M2.4 23 L2.4 8 Q2.4 6.3 3.6 5.2 L5.8 3.2 Q6.8 2.4 8.5 2.4 L17.5 2.4 Q19.2 2.4 20.2 3.2 L22.4 5.2 Q23.6 6.3 23.6 8 L23.6 23 Z" fill="none" stroke="#e6e8f0" stroke-width="0.6"/>
<rect x="0.5" y="25.4" width="25" height="2.8" fill="#e2e3e8" stroke="#8a8a8a" stroke-width="0.5"/>
<rect x="0.3" y="25" width="1" height="3.6" fill="#333"/><rect x="24.7" y="25" width="1" height="3.6" fill="#333"/>
</svg>
<div class="t " style="left:424.7px;top:94.4px;width:26px;text-align:center;font-size:5px;color:#444">PM4</div>
<div class="a" style="left:304px;top:114.3px;width:154px;height:40px;background:#fff;border:1px solid #8a8a8a"></div>
<div class="a" style="left:305px;top:115.3px;width:152px;height:38px;border:0.6px solid #dcdcdc"></div>
<div class="a" style="left:337.6px;top:114.5px;width:1.4px;height:39.5px;background:#aaa;border-left:0.5px solid #666"></div>
<div class="a" style="left:340px;top:117px;width:111px;height:4.4px;background:#f2f2f2;border:0.8px solid #6a6a6a;border-radius:1px"></div>
<div class="a" style="left:452.3px;top:116.5px;width:5.5px;height:37px;background:linear-gradient(90deg,#c8c8c8,#a0a0a0);border:0.6px solid #777"></div>
<div class="a" style="left:305px;top:115.3px;width:3.5px;height:3.5px;border:0.6px solid #777;background:#fff"></div>
<div class="a" style="left:333px;top:115.3px;width:3.5px;height:3.5px;border:0.6px solid #777;background:#ddd"></div>
<div class="a" style="left:304px;top:154px;width:8px;height:11.5px;background:#fff;border:0.8px solid #888"></div>
<div class="a" style="left:450.4px;top:153px;width:7.2px;height:12.5px;background:#fff;border:0.8px solid #888"></div>
<div class="a" style="left:312px;top:154.4px;width:26px;height:2.3px;background:#eee;border-bottom:0.6px solid #888"></div>
<div class="a" style="left:321.3px;top:130.7px;width:9.2px;height:12.8px;background:#fff;border:0.7px solid #666"></div>
<div class="t " style="left:323px;top:134.5px;font-size:4px;color:#555">er</div>
<div class="a" style="left:305.7px;top:127.9px;width:17px;height:17px;border-radius:50%;background:radial-gradient(circle at 50% 45%,#8a8a8a,#6e6e6e);border:0.9px solid #333"></div>
<div class="t " style="left:305.7px;top:134.3px;width:17px;text-align:center;font-size:4.2px;color:#222">LD4</div>
<div class="a" style="left:398.5px;top:140px;width:22px;height:10.5px;background:#f4f4f4;border-radius:2px;border:0.5px solid #ddd"></div>
<div class="a" style="left:403px;top:139.2px;width:5px;height:1.8px;background:#222"></div>
<div class="a" style="left:410px;top:139.2px;width:5.6px;height:1.8px;background:#222"></div>
<div class="a" style="left:397.2px;top:122.8px;width:15.4px;height:15.4px;border-radius:50%;background:#7c7c7c;border:0.9px solid #333"></div>
<div class="a" style="left:402.9px;top:125.8px;width:4px;height:9.5px;border:0.6px solid #333;border-radius:1px;background:#8a8a8a"></div>
<div class="a" style="left:414.5px;top:120.5px;width:0.8px;height:13px;background:#aaa"></div>
<div class="t " style="left:412px;top:133.6px;font-size:5.2px;color:#444">bot</div>
<svg class="a" style="left:340.3px;top:153.5px" width="25" height="30.5" viewBox="0 0 25 30.5">
<rect x="0.7" y="0.7" width="23.6" height="29.1" rx="2.2" fill="#c9ccd9" stroke="#6a6c78" stroke-width="1.2"/>
<rect x="1.6" y="1.3" width="21.8" height="3.8" fill="#e9e9ee"/>
<path d="M0.5 0.5 L3 0.5 L1.5 4.5 Z M24.5 0.5 L22 0.5 L23.5 4.5 Z" fill="#333"/>
<rect x="2.3" y="5.8" width="20.4" height="21.5" rx="1.2" fill="#e6e8f2"/>
<circle cx="21.5" cy="27.2" r="0.8" fill="#333"/>
</svg>
<svg class="a" style="left:341.5px;top:159px" width="23" height="23" viewBox="0 0 23 23">
<rect x="0.8" y="0.3" width="21.2" height="21" rx="1.5" fill="#d7b163"/>
<path d="M2 4 L21 4 L19 16 Q11.5 22 4 16 Z" fill="#f1dca8"/>
<path d="M5.5 4.5 L17.5 4.5 L19 11 L17.5 16 L11.5 18 L5.5 16 L4 11 Z" fill="#e6c88a"/>
<path d="M8 5 L15 5 L17.5 8 L17.5 14 L15 16 L8 16 L5.5 14 L5.5 8 Z" fill="#2f3338" stroke="#111" stroke-width="0.7"/>
<circle cx="19.8" cy="19.5" r="0.8" fill="#333"/>
</svg>
<svg class="a" style="left:368.7px;top:153.5px" width="25" height="30.5" viewBox="0 0 25 30.5">
<rect x="0.7" y="0.7" width="23.6" height="29.1" rx="2.2" fill="#c9ccd9" stroke="#6a6c78" stroke-width="1.2"/>
<rect x="1.6" y="1.3" width="21.8" height="3.8" fill="#e9e9ee"/>
<path d="M0.5 0.5 L3 0.5 L1.5 4.5 Z M24.5 0.5 L22 0.5 L23.5 4.5 Z" fill="#333"/>
<rect x="2.3" y="5.8" width="20.4" height="21.5" rx="1.2" fill="#e6e8f2"/>
<circle cx="21.5" cy="27.2" r="0.8" fill="#333"/>
</svg>
<div class="a" style="left:373.9px;top:160.9px;width:13.8px;height:15.6px;background:#1a1a1a"></div>
<div class="a" style="left:376.3px;top:164.7px;width:8.5px;height:6.6px;background:#e4e4e4;border:0.6px solid #888"></div>
<div class="t " style="left:376.3px;top:165.7px;width:8.5px;text-align:center;font-size:4.3px;color:#111;font-weight:bold">22</div>
<svg class="a" style="left:397px;top:153.5px" width="25" height="30.5" viewBox="0 0 25 30.5">
<rect x="0.7" y="0.7" width="23.6" height="29.1" rx="2.2" fill="#c9ccd9" stroke="#6a6c78" stroke-width="1.2"/>
<rect x="1.6" y="1.3" width="21.8" height="3.8" fill="#e9e9ee"/>
<path d="M0.5 0.5 L3 0.5 L1.5 4.5 Z M24.5 0.5 L22 0.5 L23.5 4.5 Z" fill="#333"/>
<rect x="2.3" y="5.8" width="20.4" height="21.5" rx="1.2" fill="#e6e8f2"/>
<circle cx="21.5" cy="27.2" r="0.8" fill="#333"/>
</svg>
<div class="a" style="left:402.2px;top:160.9px;width:13.8px;height:15.6px;background:#1a1a1a"></div>
<div class="a" style="left:404.6px;top:164.7px;width:8.5px;height:6.6px;background:#e4e4e4;border:0.6px solid #888"></div>
<div class="t " style="left:404.6px;top:165.7px;width:8.5px;text-align:center;font-size:4.3px;color:#111;font-weight:bold">23</div>
<div class="a" style="left:304.2px;top:186.8px;width:5.800000000000011px;height:193px;background:#e0e0e0;border-left:0.6px solid #f4f4f4"></div>
<div class="a" style="left:310px;top:187.2px;width:44.6px;height:161.28px;background:linear-gradient(90deg,#d8d8d8,#e2e2e2 8%,#c4c4c4 40%,#a0a0a0 75%,#8a8a8a)"></div>
<div class="a" style="left:310px;top:348.48px;width:44.6px;height:30.72px;background:#fff"></div>
<div class="a" style="left:310px;top:187.2px;width:0.9px;height:192.0px;background:#7a7a7a"></div>
<div class="a" style="left:353.6px;top:187.2px;width:1px;height:192.0px;background:#4a4a4a"></div>
<div class="a" style="left:310px;top:186.79999999999998px;width:44.6px;height:0.8px;background:#6a6a6a"></div>
<div class="a" style="left:310px;top:194.48px;width:44.6px;height:0.8px;background:#6a6a6a"></div>
<div class="a" style="left:310px;top:202.16px;width:44.6px;height:0.8px;background:#6a6a6a"></div>
<div class="a" style="left:310px;top:209.83999999999997px;width:44.6px;height:0.8px;background:#6a6a6a"></div>
<div class="a" style="left:310px;top:217.51999999999998px;width:44.6px;height:0.8px;background:#6a6a6a"></div>
<div class="a" style="left:310px;top:225.2px;width:44.6px;height:0.8px;background:#6a6a6a"></div>
<div class="a" style="left:310px;top:232.87999999999997px;width:44.6px;height:0.8px;background:#6a6a6a"></div>
<div class="a" style="left:310px;top:240.55999999999997px;width:44.6px;height:0.8px;background:#6a6a6a"></div>
<div class="a" style="left:310px;top:248.23999999999998px;width:44.6px;height:0.8px;background:#6a6a6a"></div>
<div class="a" style="left:310px;top:255.92px;width:44.6px;height:0.8px;background:#6a6a6a"></div>
<div class="a" style="left:310px;top:263.6px;width:44.6px;height:0.8px;background:#6a6a6a"></div>
<div class="a" style="left:310px;top:271.28px;width:44.6px;height:0.8px;background:#6a6a6a"></div>
<div class="a" style="left:310px;top:278.96000000000004px;width:44.6px;height:0.8px;background:#6a6a6a"></div>
<div class="a" style="left:310px;top:286.64px;width:44.6px;height:0.8px;background:#6a6a6a"></div>
<div class="a" style="left:310px;top:294.32px;width:44.6px;height:0.8px;background:#6a6a6a"></div>
<div class="a" style="left:310px;top:302.0px;width:44.6px;height:0.8px;background:#6a6a6a"></div>
<div class="a" style="left:310px;top:309.68px;width:44.6px;height:0.8px;background:#6a6a6a"></div>
<div class="a" style="left:310px;top:317.36px;width:44.6px;height:0.8px;background:#6a6a6a"></div>
<div class="a" style="left:310px;top:325.04px;width:44.6px;height:0.8px;background:#6a6a6a"></div>
<div class="a" style="left:310px;top:332.72px;width:44.6px;height:0.8px;background:#6a6a6a"></div>
<div class="a" style="left:310px;top:340.4px;width:44.6px;height:0.8px;background:#6a6a6a"></div>
<div class="a" style="left:310px;top:348.08000000000004px;width:44.6px;height:0.8px;background:#6a6a6a"></div>
<div class="a" style="left:310px;top:355.76px;width:44.6px;height:0.8px;background:#6a6a6a"></div>
<div class="a" style="left:310px;top:363.44px;width:44.6px;height:0.8px;background:#6a6a6a"></div>
<div class="a" style="left:310px;top:371.12px;width:44.6px;height:0.8px;background:#6a6a6a"></div>
<div class="a" style="left:310px;top:378.8px;width:44.6px;height:0.8px;background:#6a6a6a"></div>
<div class="t " style="left:305.2px;top:189.2025px;font-size:3.3px;color:#333">25</div>
<div class="a" style="left:311px;top:187.7px;width:42.6px;height:1px;background:rgba(255,255,255,0.35)"></div>
<div class="t " style="left:312px;top:189.2025px;font-size:3.3px;color:#222">1.25</div>
<div class="t " style="left:305.2px;top:196.8825px;font-size:3.3px;color:#333">24</div>
<div class="a" style="left:311px;top:195.38px;width:42.6px;height:1px;background:rgba(255,255,255,0.35)"></div>
<div class="t " style="left:312px;top:196.8825px;font-size:3.3px;color:#222">1.24</div>
<div class="t " style="left:305.2px;top:204.5625px;font-size:3.3px;color:#333">23</div>
<div class="a" style="left:311px;top:203.06px;width:42.6px;height:1px;background:rgba(255,255,255,0.35)"></div>
<div class="t " style="left:312px;top:204.5625px;font-size:3.3px;color:#222">1.23</div>
<div class="t " style="left:305.2px;top:212.24249999999998px;font-size:3.3px;color:#333">22</div>
<div class="a" style="left:311px;top:210.73999999999998px;width:42.6px;height:1px;background:rgba(255,255,255,0.35)"></div>
<div class="t " style="left:312px;top:212.24249999999998px;font-size:3.3px;color:#222">1.22</div>
<div class="t " style="left:305.2px;top:219.92249999999999px;font-size:3.3px;color:#333">21</div>
<div class="a" style="left:311px;top:218.42px;width:42.6px;height:1px;background:rgba(255,255,255,0.35)"></div>
<div class="t " style="left:312px;top:219.92249999999999px;font-size:3.3px;color:#222">1.21</div>
<div class="t " style="left:305.2px;top:227.6025px;font-size:3.3px;color:#333">20</div>
<div class="a" style="left:311px;top:226.1px;width:42.6px;height:1px;background:rgba(255,255,255,0.35)"></div>
<div class="t " style="left:312px;top:227.6025px;font-size:3.3px;color:#222">1.20</div>
<div class="t " style="left:305.2px;top:235.28249999999997px;font-size:3.3px;color:#333">19</div>
<div class="a" style="left:311px;top:233.77999999999997px;width:42.6px;height:1px;background:rgba(255,255,255,0.35)"></div>
<div class="t " style="left:312px;top:235.28249999999997px;font-size:3.3px;color:#222">1.19</div>
<div class="t " style="left:305.2px;top:242.96249999999998px;font-size:3.3px;color:#333">18</div>
<div class="a" style="left:311px;top:241.45999999999998px;width:42.6px;height:1px;background:rgba(255,255,255,0.35)"></div>
<div class="t " style="left:312px;top:242.96249999999998px;font-size:3.3px;color:#222">1.18</div>
<div class="t " style="left:305.2px;top:250.64249999999998px;font-size:3.3px;color:#333">17</div>
<div class="a" style="left:311px;top:249.14px;width:42.6px;height:1px;background:rgba(255,255,255,0.35)"></div>
<div class="t " style="left:312px;top:250.64249999999998px;font-size:3.3px;color:#222">1.17</div>
<div class="t " style="left:305.2px;top:258.3225px;font-size:3.3px;color:#333">16</div>
<div class="a" style="left:311px;top:256.82px;width:42.6px;height:1px;background:rgba(255,255,255,0.35)"></div>
<div class="t " style="left:312px;top:258.3225px;font-size:3.3px;color:#222">1.16</div>
<div class="t " style="left:305.2px;top:266.0025px;font-size:3.3px;color:#333">15</div>
<div class="a" style="left:311px;top:264.5px;width:42.6px;height:1px;background:rgba(255,255,255,0.35)"></div>
<div class="t " style="left:312px;top:266.0025px;font-size:3.3px;color:#222">1.15</div>
<div class="t " style="left:305.2px;top:273.68249999999995px;font-size:3.3px;color:#333">14</div>
<div class="a" style="left:311px;top:272.17999999999995px;width:42.6px;height:1px;background:rgba(255,255,255,0.35)"></div>
<div class="t " style="left:312px;top:273.68249999999995px;font-size:3.3px;color:#222">1.14</div>
<div class="t " style="left:305.2px;top:281.3625px;font-size:3.3px;color:#333">13</div>
<div class="a" style="left:311px;top:279.86px;width:42.6px;height:1px;background:rgba(255,255,255,0.35)"></div>
<div class="t " style="left:312px;top:281.3625px;font-size:3.3px;color:#222">1.13</div>
<div class="t " style="left:305.2px;top:289.04249999999996px;font-size:3.3px;color:#333">12</div>
<div class="a" style="left:311px;top:287.53999999999996px;width:42.6px;height:1px;background:rgba(255,255,255,0.35)"></div>
<div class="t " style="left:312px;top:289.04249999999996px;font-size:3.3px;color:#222">1.12</div>
<div class="t " style="left:305.2px;top:296.72249999999997px;font-size:3.3px;color:#333">11</div>
<div class="a" style="left:311px;top:295.21999999999997px;width:42.6px;height:1px;background:rgba(255,255,255,0.35)"></div>
<div class="t " style="left:312px;top:296.72249999999997px;font-size:3.3px;color:#222">1.11</div>
<div class="t " style="left:305.2px;top:304.4025px;font-size:3.3px;color:#333">10</div>
<div class="a" style="left:311px;top:302.9px;width:42.6px;height:1px;background:rgba(255,255,255,0.35)"></div>
<div class="t " style="left:312px;top:304.4025px;font-size:3.3px;color:#222">1.10</div>
<div class="t " style="left:305.2px;top:312.0825px;font-size:3.3px;color:#333">09</div>
<div class="a" style="left:311px;top:310.58px;width:42.6px;height:1px;background:rgba(255,255,255,0.35)"></div>
<div class="t " style="left:312px;top:312.0825px;font-size:3.3px;color:#222">1.09</div>
<div class="t " style="left:305.2px;top:319.7625px;font-size:3.3px;color:#333">08</div>
<div class="a" style="left:311px;top:318.26px;width:42.6px;height:1px;background:rgba(255,255,255,0.35)"></div>
<div class="t " style="left:312px;top:319.7625px;font-size:3.3px;color:#222">1.08</div>
<div class="t " style="left:305.2px;top:327.4425px;font-size:3.3px;color:#333">07</div>
<div class="a" style="left:311px;top:325.94px;width:42.6px;height:1px;background:rgba(255,255,255,0.35)"></div>
<div class="t " style="left:312px;top:327.4425px;font-size:3.3px;color:#222">1.07</div>
<div class="t " style="left:305.2px;top:335.1225px;font-size:3.3px;color:#333">06</div>
<div class="a" style="left:311px;top:333.62px;width:42.6px;height:1px;background:rgba(255,255,255,0.35)"></div>
<div class="t " style="left:312px;top:335.1225px;font-size:3.3px;color:#222">1.06</div>
<div class="t " style="left:305.2px;top:342.80249999999995px;font-size:3.3px;color:#333">05</div>
<div class="a" style="left:311px;top:341.29999999999995px;width:42.6px;height:1px;background:rgba(255,255,255,0.35)"></div>
<div class="t " style="left:312px;top:342.80249999999995px;font-size:3.3px;color:#222">1.05</div>
<div class="t " style="left:305.2px;top:350.4825px;font-size:3.3px;color:#333">04</div>
<div class="t " style="left:305.2px;top:358.16249999999997px;font-size:3.3px;color:#333">03</div>
<div class="t " style="left:305.2px;top:365.8425px;font-size:3.3px;color:#333">02</div>
<div class="t " style="left:305.2px;top:373.5225px;font-size:3.3px;color:#333">01</div>
<div class="a" style="left:356.6px;top:186.8px;width:4.899999999999977px;height:193px;background:#e0e0e0;border-left:0.6px solid #f4f4f4"></div>
<div class="a" style="left:361.5px;top:187.2px;width:44.4px;height:0.0px;background:linear-gradient(90deg,#d8d8d8,#e2e2e2 8%,#c4c4c4 40%,#a0a0a0 75%,#8a8a8a)"></div>
<div class="a" style="left:361.5px;top:187.2px;width:44.4px;height:192.0px;background:#fff"></div>
<div class="a" style="left:361.5px;top:187.2px;width:0.9px;height:192.0px;background:#7a7a7a"></div>
<div class="a" style="left:404.9px;top:187.2px;width:1px;height:192.0px;background:#4a4a4a"></div>
<div class="a" style="left:361.5px;top:186.79999999999998px;width:44.4px;height:0.8px;background:#6a6a6a"></div>
<div class="a" style="left:361.5px;top:194.48px;width:44.4px;height:0.8px;background:#6a6a6a"></div>
<div class="a" style="left:361.5px;top:202.16px;width:44.4px;height:0.8px;background:#6a6a6a"></div>
<div class="a" style="left:361.5px;top:209.83999999999997px;width:44.4px;height:0.8px;background:#6a6a6a"></div>
<div class="a" style="left:361.5px;top:217.51999999999998px;width:44.4px;height:0.8px;background:#6a6a6a"></div>
<div class="a" style="left:361.5px;top:225.2px;width:44.4px;height:0.8px;background:#6a6a6a"></div>
<div class="a" style="left:361.5px;top:232.87999999999997px;width:44.4px;height:0.8px;background:#6a6a6a"></div>
<div class="a" style="left:361.5px;top:240.55999999999997px;width:44.4px;height:0.8px;background:#6a6a6a"></div>
<div class="a" style="left:361.5px;top:248.23999999999998px;width:44.4px;height:0.8px;background:#6a6a6a"></div>
<div class="a" style="left:361.5px;top:255.92px;width:44.4px;height:0.8px;background:#6a6a6a"></div>
<div class="a" style="left:361.5px;top:263.6px;width:44.4px;height:0.8px;background:#6a6a6a"></div>
<div class="a" style="left:361.5px;top:271.28px;width:44.4px;height:0.8px;background:#6a6a6a"></div>
<div class="a" style="left:361.5px;top:278.96000000000004px;width:44.4px;height:0.8px;background:#6a6a6a"></div>
<div class="a" style="left:361.5px;top:286.64px;width:44.4px;height:0.8px;background:#6a6a6a"></div>
<div class="a" style="left:361.5px;top:294.32px;width:44.4px;height:0.8px;background:#6a6a6a"></div>
<div class="a" style="left:361.5px;top:302.0px;width:44.4px;height:0.8px;background:#6a6a6a"></div>
<div class="a" style="left:361.5px;top:309.68px;width:44.4px;height:0.8px;background:#6a6a6a"></div>
<div class="a" style="left:361.5px;top:317.36px;width:44.4px;height:0.8px;background:#6a6a6a"></div>
<div class="a" style="left:361.5px;top:325.04px;width:44.4px;height:0.8px;background:#6a6a6a"></div>
<div class="a" style="left:361.5px;top:332.72px;width:44.4px;height:0.8px;background:#6a6a6a"></div>
<div class="a" style="left:361.5px;top:340.4px;width:44.4px;height:0.8px;background:#6a6a6a"></div>
<div class="a" style="left:361.5px;top:348.08000000000004px;width:44.4px;height:0.8px;background:#6a6a6a"></div>
<div class="a" style="left:361.5px;top:355.76px;width:44.4px;height:0.8px;background:#6a6a6a"></div>
<div class="a" style="left:361.5px;top:363.44px;width:44.4px;height:0.8px;background:#6a6a6a"></div>
<div class="a" style="left:361.5px;top:371.12px;width:44.4px;height:0.8px;background:#6a6a6a"></div>
<div class="a" style="left:361.5px;top:378.8px;width:44.4px;height:0.8px;background:#6a6a6a"></div>
<div class="t " style="left:357.6px;top:189.2025px;font-size:3.3px;color:#333">25</div>
<div class="t " style="left:357.6px;top:196.8825px;font-size:3.3px;color:#333">24</div>
<div class="t " style="left:357.6px;top:204.5625px;font-size:3.3px;color:#333">23</div>
<div class="t " style="left:357.6px;top:212.24249999999998px;font-size:3.3px;color:#333">22</div>
<div class="t " style="left:357.6px;top:219.92249999999999px;font-size:3.3px;color:#333">21</div>
<div class="t " style="left:357.6px;top:227.6025px;font-size:3.3px;color:#333">20</div>
<div class="t " style="left:357.6px;top:235.28249999999997px;font-size:3.3px;color:#333">19</div>
<div class="t " style="left:357.6px;top:242.96249999999998px;font-size:3.3px;color:#333">18</div>
<div class="t " style="left:357.6px;top:250.64249999999998px;font-size:3.3px;color:#333">17</div>
<div class="t " style="left:357.6px;top:258.3225px;font-size:3.3px;color:#333">16</div>
<div class="t " style="left:357.6px;top:266.0025px;font-size:3.3px;color:#333">15</div>
<div class="t " style="left:357.6px;top:273.68249999999995px;font-size:3.3px;color:#333">14</div>
<div class="t " style="left:357.6px;top:281.3625px;font-size:3.3px;color:#333">13</div>
<div class="t " style="left:357.6px;top:289.04249999999996px;font-size:3.3px;color:#333">12</div>
<div class="t " style="left:357.6px;top:296.72249999999997px;font-size:3.3px;color:#333">11</div>
<div class="t " style="left:357.6px;top:304.4025px;font-size:3.3px;color:#333">10</div>
<div class="t " style="left:357.6px;top:312.0825px;font-size:3.3px;color:#333">09</div>
<div class="t " style="left:357.6px;top:319.7625px;font-size:3.3px;color:#333">08</div>
<div class="t " style="left:357.6px;top:327.4425px;font-size:3.3px;color:#333">07</div>
<div class="t " style="left:357.6px;top:335.1225px;font-size:3.3px;color:#333">06</div>
<div class="t " style="left:357.6px;top:342.80249999999995px;font-size:3.3px;color:#333">05</div>
<div class="t " style="left:357.6px;top:350.4825px;font-size:3.3px;color:#333">04</div>
<div class="t " style="left:357.6px;top:358.16249999999997px;font-size:3.3px;color:#333">03</div>
<div class="t " style="left:357.6px;top:365.8425px;font-size:3.3px;color:#333">02</div>
<div class="t " style="left:357.6px;top:373.5225px;font-size:3.3px;color:#333">01</div>
<div class="a" style="left:408.5px;top:186.8px;width:5.100000000000023px;height:193px;background:#e0e0e0;border-left:0.6px solid #f4f4f4"></div>
<div class="a" style="left:413.6px;top:187.2px;width:44.8px;height:0.0px;background:linear-gradient(90deg,#d8d8d8,#e2e2e2 8%,#c4c4c4 40%,#a0a0a0 75%,#8a8a8a)"></div>
<div class="a" style="left:413.6px;top:187.2px;width:44.8px;height:192.0px;background:#fff"></div>
<div class="a" style="left:413.6px;top:187.2px;width:0.9px;height:192.0px;background:#7a7a7a"></div>
<div class="a" style="left:457.40000000000003px;top:187.2px;width:1px;height:192.0px;background:#4a4a4a"></div>
<div class="a" style="left:413.6px;top:186.79999999999998px;width:44.8px;height:0.8px;background:#6a6a6a"></div>
<div class="a" style="left:413.6px;top:194.48px;width:44.8px;height:0.8px;background:#6a6a6a"></div>
<div class="a" style="left:413.6px;top:202.16px;width:44.8px;height:0.8px;background:#6a6a6a"></div>
<div class="a" style="left:413.6px;top:209.83999999999997px;width:44.8px;height:0.8px;background:#6a6a6a"></div>
<div class="a" style="left:413.6px;top:217.51999999999998px;width:44.8px;height:0.8px;background:#6a6a6a"></div>
<div class="a" style="left:413.6px;top:225.2px;width:44.8px;height:0.8px;background:#6a6a6a"></div>
<div class="a" style="left:413.6px;top:232.87999999999997px;width:44.8px;height:0.8px;background:#6a6a6a"></div>
<div class="a" style="left:413.6px;top:240.55999999999997px;width:44.8px;height:0.8px;background:#6a6a6a"></div>
<div class="a" style="left:413.6px;top:248.23999999999998px;width:44.8px;height:0.8px;background:#6a6a6a"></div>
<div class="a" style="left:413.6px;top:255.92px;width:44.8px;height:0.8px;background:#6a6a6a"></div>
<div class="a" style="left:413.6px;top:263.6px;width:44.8px;height:0.8px;background:#6a6a6a"></div>
<div class="a" style="left:413.6px;top:271.28px;width:44.8px;height:0.8px;background:#6a6a6a"></div>
<div class="a" style="left:413.6px;top:278.96000000000004px;width:44.8px;height:0.8px;background:#6a6a6a"></div>
<div class="a" style="left:413.6px;top:286.64px;width:44.8px;height:0.8px;background:#6a6a6a"></div>
<div class="a" style="left:413.6px;top:294.32px;width:44.8px;height:0.8px;background:#6a6a6a"></div>
<div class="a" style="left:413.6px;top:302.0px;width:44.8px;height:0.8px;background:#6a6a6a"></div>
<div class="a" style="left:413.6px;top:309.68px;width:44.8px;height:0.8px;background:#6a6a6a"></div>
<div class="a" style="left:413.6px;top:317.36px;width:44.8px;height:0.8px;background:#6a6a6a"></div>
<div class="a" style="left:413.6px;top:325.04px;width:44.8px;height:0.8px;background:#6a6a6a"></div>
<div class="a" style="left:413.6px;top:332.72px;width:44.8px;height:0.8px;background:#6a6a6a"></div>
<div class="a" style="left:413.6px;top:340.4px;width:44.8px;height:0.8px;background:#6a6a6a"></div>
<div class="a" style="left:413.6px;top:348.08000000000004px;width:44.8px;height:0.8px;background:#6a6a6a"></div>
<div class="a" style="left:413.6px;top:355.76px;width:44.8px;height:0.8px;background:#6a6a6a"></div>
<div class="a" style="left:413.6px;top:363.44px;width:44.8px;height:0.8px;background:#6a6a6a"></div>
<div class="a" style="left:413.6px;top:371.12px;width:44.8px;height:0.8px;background:#6a6a6a"></div>
<div class="a" style="left:413.6px;top:378.8px;width:44.8px;height:0.8px;background:#6a6a6a"></div>
<div class="t " style="left:409.5px;top:189.2025px;font-size:3.3px;color:#333">25</div>
<div class="t " style="left:409.5px;top:196.8825px;font-size:3.3px;color:#333">24</div>
<div class="t " style="left:409.5px;top:204.5625px;font-size:3.3px;color:#333">23</div>
<div class="t " style="left:409.5px;top:212.24249999999998px;font-size:3.3px;color:#333">22</div>
<div class="t " style="left:409.5px;top:219.92249999999999px;font-size:3.3px;color:#333">21</div>
<div class="t " style="left:409.5px;top:227.6025px;font-size:3.3px;color:#333">20</div>
<div class="t " style="left:409.5px;top:235.28249999999997px;font-size:3.3px;color:#333">19</div>
<div class="t " style="left:409.5px;top:242.96249999999998px;font-size:3.3px;color:#333">18</div>
<div class="t " style="left:409.5px;top:250.64249999999998px;font-size:3.3px;color:#333">17</div>
<div class="t " style="left:409.5px;top:258.3225px;font-size:3.3px;color:#333">16</div>
<div class="t " style="left:409.5px;top:266.0025px;font-size:3.3px;color:#333">15</div>
<div class="t " style="left:409.5px;top:273.68249999999995px;font-size:3.3px;color:#333">14</div>
<div class="t " style="left:409.5px;top:281.3625px;font-size:3.3px;color:#333">13</div>
<div class="t " style="left:409.5px;top:289.04249999999996px;font-size:3.3px;color:#333">12</div>
<div class="t " style="left:409.5px;top:296.72249999999997px;font-size:3.3px;color:#333">11</div>
<div class="t " style="left:409.5px;top:304.4025px;font-size:3.3px;color:#333">10</div>
<div class="t " style="left:409.5px;top:312.0825px;font-size:3.3px;color:#333">09</div>
<div class="t " style="left:409.5px;top:319.7625px;font-size:3.3px;color:#333">08</div>
<div class="t " style="left:409.5px;top:327.4425px;font-size:3.3px;color:#333">07</div>
<div class="t " style="left:409.5px;top:335.1225px;font-size:3.3px;color:#333">06</div>
<div class="t " style="left:409.5px;top:342.80249999999995px;font-size:3.3px;color:#333">05</div>
<div class="t " style="left:409.5px;top:350.4825px;font-size:3.3px;color:#333">04</div>
<div class="t " style="left:409.5px;top:358.16249999999997px;font-size:3.3px;color:#333">03</div>
<div class="t " style="left:409.5px;top:365.8425px;font-size:3.3px;color:#333">02</div>
<div class="t " style="left:409.5px;top:373.5225px;font-size:3.3px;color:#333">01</div>
<div class="a" style="left:458.5px;top:80.5px;width:196px;height:300px;background:#d6d6d6"></div>
<div class="a" style="left:460.5px;top:80.5px;width:1px;height:300px;background:#ececec"></div>
<div class="t " style="left:462.4px;top:83.4px;font-size:5.8px;color:#222">Variable</div>
<div class="t " style="left:529px;top:83.4px;font-size:5.8px;color:#222">Value</div>
<div class="a" style="left:463px;top:89.6px;width:187.5px;height:289.5px;background:#fff;border:1px solid #c0c0c0;border-right-color:#e8e8e8;border-bottom-color:#e8e8e8"></div>
<div class="t " style="left:464px;top:92.4px;font-size:4.85px;color:#1a1a1a">Aligner.Angle</div>
<div class="t b" style="left:530px;top:92.4px;font-size:5px;color:#111">0.0</div>
<div class="t " style="left:464px;top:99.12px;font-size:4.85px;color:#1a1a1a">LP1.CarrierID</div>
<div class="t b" style="left:530px;top:99.12px;font-size:5px;color:#111">LP100001</div>
<div class="t " style="left:464px;top:105.84px;font-size:4.85px;color:#1a1a1a">LP2.CarrierID</div>
<div class="t b" style="left:530px;top:105.84px;font-size:5px;color:#111"></div>
<div class="t " style="left:464px;top:112.56px;font-size:4.85px;color:#1a1a1a">LP3.CarrierID</div>
<div class="t b" style="left:530px;top:112.56px;font-size:5px;color:#111"></div>
<div class="t " style="left:464px;top:119.28px;font-size:4.85px;color:#1a1a1a">PM1.ProcessTimeRemaining</div>
<div class="t b" style="left:530px;top:119.28px;font-size:5px;color:#111">57339 ms</div>
<div class="t " style="left:464px;top:126.0px;font-size:4.85px;color:#1a1a1a">PM2.ProcessTimeRemaining</div>
<div class="t b" style="left:530px;top:126.0px;font-size:5px;color:#111">59112 ms</div>
<div class="t " style="left:464px;top:132.72px;font-size:4.85px;color:#1a1a1a">PM3.ProcessTimeRemaining</div>
<div class="t b" style="left:530px;top:132.72px;font-size:5px;color:#111">0 ms</div>
<div class="t " style="left:464px;top:139.44px;font-size:4.85px;color:#1a1a1a">PM4.ProcessTimeRemaining</div>
<div class="t b" style="left:530px;top:139.44px;font-size:5px;color:#111">0 ms</div>
<div class="a" style="left:5px;top:380.5px;width:650px;height:36.3px;background:#fff;border-top:1px solid #9a9a9a;border-bottom:0.8px solid #c4c4c4;border-right:0.8px solid #c4c4c4;border-left:0.8px solid #dedede"></div>
<div class="a" style="left:7px;top:382.6px;width:37px;height:32.6px;border:2px solid #e29af2;border-radius:2px;background:linear-gradient(#c4e4f6,#b0d9f2)"></div>
<div class="a" style="left:7px;top:398.8px;width:37px;height:16.4px;border:2px solid #6a0880;border-top:0;border-radius:0 0 2px 2px"></div>
<div class="t " style="left:7px;top:408.6px;width:37px;text-align:center;font-size:4.9px;color:#1a2a3a">Operations</div>
<div class="a" style="left:47.3px;top:384.3px;width:33.7px;height:29.2px;border:0.8px solid #c4c4c4;border-radius:1.5px;background:linear-gradient(#fafafa,#e9e9e9 60%,#dcdcdc)"></div>
<div class="t " style="left:47.3px;top:408.6px;width:33.7px;text-align:center;font-size:4.9px;color:#333">Service</div>
<div class="a" style="left:86.4px;top:384.3px;width:33.599999999999994px;height:29.2px;border:0.8px solid #c4c4c4;border-radius:1.5px;background:linear-gradient(#fafafa,#e9e9e9 60%,#dcdcdc)"></div>
<div class="t " style="left:86.4px;top:408.6px;width:33.599999999999994px;text-align:center;font-size:4.9px;color:#333">Recipes</div>
<div class="a" style="left:125.5px;top:384.3px;width:30.900000000000006px;height:29.2px;border:0.8px solid #c4c4c4;border-radius:1.5px;background:linear-gradient(#fafafa,#e9e9e9 60%,#dcdcdc)"></div>
<div class="t " style="left:125.5px;top:408.6px;width:30.900000000000006px;text-align:center;font-size:4.9px;color:#333">Data</div>
<div class="a" style="left:163.3px;top:384.3px;width:33.5px;height:29.2px;border:0.8px solid #c4c4c4;border-radius:1.5px;background:linear-gradient(#fafafa,#e9e9e9 60%,#dcdcdc)"></div>
<div class="t " style="left:163.3px;top:408.6px;width:33.5px;text-align:center;font-size:4.9px;color:#333">Configuration</div>
<div class="a" style="left:201.9px;top:384.3px;width:33.5px;height:29.2px;border:0.8px solid #c4c4c4;border-radius:1.5px;background:linear-gradient(#fafafa,#e9e9e9 60%,#dcdcdc)"></div>
<div class="t " style="left:201.9px;top:408.6px;width:33.5px;text-align:center;font-size:4.9px;color:#333">Alarms</div>
<div class="a" style="left:240px;top:384.3px;width:33.60000000000002px;height:29.2px;border:0.8px solid #c4c4c4;border-radius:1.5px;background:linear-gradient(#fafafa,#e9e9e9 60%,#dcdcdc)"></div>
<div class="t " style="left:240px;top:408.6px;width:33.60000000000002px;text-align:center;font-size:4.9px;color:#333">Logout</div>
<svg class="a" style="left:12px;top:387px" width="28" height="18" viewBox="0 0 28 18">
<ellipse cx="5.2" cy="3.3" rx="4" ry="1.5" fill="none" stroke="#2a4a7a" stroke-width="0.8"/>
<path d="M3.2 7 L6.8 9.3" stroke="#2a78d0" stroke-width="1.3"/><path d="M5.5 10.3 L8.3 10.2 L7.3 8 Z" fill="#2a78d0"/>
<path d="M17.8 0.8 L25.5 4.2 L25.5 12.8 L17.8 16.8 L10.2 12.8 L10.2 4.2 Z" fill="#e85a20" stroke="#b83a10" stroke-width="0.6"/>
<path d="M17.8 0.8 L25.5 4.2 L17.8 7.6 L10.2 4.2 Z" fill="#f89a6a"/>
<path d="M17.8 7.6 L25.5 4.2 L25.5 12.8 L17.8 16.8 Z" fill="#d84a18"/>
<path d="M14 5.5 L14 12.5 Q17.8 14.5 21.6 12.5 L21.6 5.5 Z" fill="#e4b868"/>
<ellipse cx="17.8" cy="5.5" rx="3.8" ry="1.4" fill="#f6e0a8"/>
<path d="M15.5 6.5 L15.5 12.8" stroke="#fff0c0" stroke-width="0.9" opacity="0.8"/>
</svg>
<svg class="a" style="left:51px;top:387.5px" width="26" height="15" viewBox="0 0 26 15">
<path d="M4 3.5 L21.5 11.5" stroke="#a4a4a4" stroke-width="2.8" stroke-linecap="round"/>
<path d="M4 3 L21.5 11" stroke="#e0e0e0" stroke-width="0.8"/>
<circle cx="3.4" cy="3.2" r="2.7" fill="#c8c8c8" stroke="#8a8a8a" stroke-width="0.9"/>
<circle cx="3.4" cy="3.2" r="1.1" fill="#f0f0f0"/>
<circle cx="22.2" cy="11.6" r="2.8" fill="#c8c8c8" stroke="#8a8a8a" stroke-width="0.9"/>
<path d="M21 10 L23.8 10.5 L22.5 13" fill="#f0f0f0"/>
</svg>
<svg class="a" style="left:89px;top:386px" width="28" height="18" viewBox="0 0 28 18">
<path d="M16 10 L26 9 L20 15 L14 15 Z" fill="#b8b8b8" opacity="0.7"/>
<path d="M1.5 2 L6 1 L7 2.2 L13 2 L16 3.5 L15.5 16 L3 14.5 Z" fill="#f5cf6a" stroke="#c8a040" stroke-width="0.6"/>
<path d="M3 4.5 L16 5 L15.5 16 L3 14.5 Z" fill="#fbe08a"/>
</svg>
<svg class="a" style="left:129px;top:386px" width="24" height="18" viewBox="0 0 24 18">
<rect x="2.2" y="2" width="1.3" height="14" fill="#7a7a7a"/>
<rect x="2.2" y="15" width="20" height="1.2" fill="#555"/>
<rect x="5.5" y="7" width="2.2" height="8" fill="#d84848"/>
<rect x="9.5" y="2.5" width="2.2" height="12.5" fill="#58a048"/>
<rect x="13.5" y="4" width="2.2" height="11" fill="#3a88a8"/>
<rect x="17.5" y="8" width="2.2" height="7" fill="#e8c058"/>
</svg>
<svg class="a" style="left:171px;top:386px" width="20" height="16" viewBox="0 0 20 16">
<g transform="translate(6.5 5.5)"><circle r="4.2" fill="#7ec820"/><g fill="#7ec820">
<rect x="-1" y="-6" width="2" height="12"/><rect x="-6" y="-1" width="12" height="2"/>
<rect x="-1" y="-6" width="2" height="12" transform="rotate(45)"/><rect x="-1" y="-6" width="2" height="12" transform="rotate(-45)"/></g>
<circle r="2" fill="#b8e870"/></g>
<circle cx="13.5" cy="11" r="2.6" fill="#5a4aa8"/><circle cx="13.5" cy="11" r="1.1" fill="#e8e8f8"/>
</svg>
<svg class="a" style="left:209px;top:386px" width="20" height="17" viewBox="0 0 20 17">
<path d="M10 1 L19 15.5 L1 15.5 Z" fill="#e83a14" stroke="#a82a10" stroke-width="0.8" stroke-linejoin="round"/>
<path d="M10 3.5 L17 14.5 L3 14.5 Z" fill="#f04a1e"/>
<path d="M9.3 5.5 L10.7 5.5 L10.4 11 L9.6 11 Z" fill="#2a0a00"/><circle cx="10" cy="12.8" r="0.8" fill="#2a0a00"/>
</svg>
<svg class="a" style="left:243px;top:387px" width="30" height="16" viewBox="0 0 30 16">
<path d="M9 8 L26 3.5 L27.5 5 L25 7 L23 6.5 L21.5 8.5 L19.5 8 L18 10 L10 11.5 Z" fill="#9a9a9a"/>
<circle cx="6.5" cy="9.5" r="5" fill="#a8a8a8" stroke="#8a8a8a" stroke-width="0.5"/>
<circle cx="4.5" cy="10" r="1.3" fill="#e8e8e8"/>
</svg></body></html>
